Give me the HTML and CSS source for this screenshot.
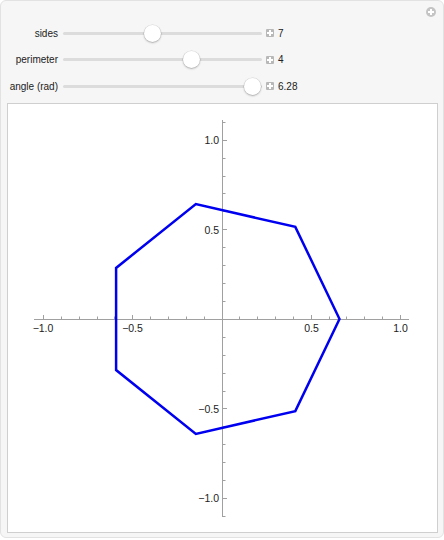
FILE: index.html
```html
<!DOCTYPE html>
<html>
<head>
<meta charset="utf-8">
<link rel="stylesheet" href="styles.css">
</head>
<body>
<div class="panel">
  <div class="topbar"><span class="addbtn"></span></div>
  <div class="controls">
    <div class="row">
      <span class="label">sides</span>
      <div class="track"><span class="thumb" style="left:89px"></span></div>
      <span class="plus"></span>
      <span class="value">7</span>
    </div>
    <div class="row">
      <span class="label">perimeter</span>
      <div class="track"><span class="thumb" style="left:128px"></span></div>
      <span class="plus"></span>
      <span class="value">4</span>
    </div>
    <div class="row">
      <span class="label">angle (rad)</span>
      <div class="track"><span class="thumb" style="left:189px"></span></div>
      <span class="plus"></span>
      <span class="value">6.28</span>
    </div>
  </div>
  <div class="plot">
    <svg class="graph" width="429" height="428" viewBox="8 104 429 428">
      <g class="axes">
        <line x1="34" y1="319.5" x2="409" y2="319.5"/>
        <line x1="222.5" y1="120" x2="222.5" y2="517"/>
        <path d="M43.5 319V315 M61.5 319V316.5 M79.5 319V316.5 M97.5 319V316.5 M114.5 319V316.5 M132.5 319V315 M150.5 319V316.5 M168.5 319V316.5 M186.5 319V316.5 M204.5 319V316.5 M239.5 319V316.5 M257.5 319V316.5 M275.5 319V316.5 M293.5 319V316.5 M311.5 319V315 M329.5 319V316.5 M346.5 319V316.5 M364.5 319V316.5 M382.5 319V316.5 M400.5 319V315"/>
        <path d="M223 122.5H225.5 M223 140.5H227 M223 158.5H225.5 M223 176.5H225.5 M223 193.5H225.5 M223 211.5H225.5 M223 229.5H227 M223 247.5H225.5 M223 265.5H225.5 M223 283.5H225.5 M223 301.5H225.5 M223 337.5H225.5 M223 355.5H225.5 M223 373.5H225.5 M223 391.5H225.5 M223 408.5H227 M223 426.5H225.5 M223 444.5H225.5 M223 462.5H225.5 M223 480.5H225.5 M223 498.5H227 M223 516.5H225.5"/>
      </g>
      <g class="ticklabels">
        <text x="43" y="331.5" text-anchor="middle">−1.0</text>
        <text x="132.5" y="331.5" text-anchor="middle">−0.5</text>
        <text x="311.5" y="331.5" text-anchor="middle">0.5</text>
        <text x="400.5" y="331.5" text-anchor="middle">1.0</text>
        <text x="219" y="144" text-anchor="end">1.0</text>
        <text x="219" y="233.5" text-anchor="end">0.5</text>
        <text x="219" y="412.5" text-anchor="end">−0.5</text>
        <text x="219" y="502" text-anchor="end">−1.0</text>
      </g>
      <polygon class="poly" points="339.5,319 295.3,226.9 195.85,204.1 116.1,267.9 116.1,370.1 195.85,433.9 295.3,411.1"/>
    </svg>
  </div>
</div>
</body>
</html>
```

FILE: styles.css
```css
html, body {
  margin: 0;
  padding: 0;
  background: #ffffff;
}

body {
  font-family: "Liberation Sans", Arial, sans-serif;
  font-size: 10px;
  color: #222;
}

.panel {
  width: 444px;
  height: 538px;
  box-sizing: border-box;
  border: 1px solid #e2e2e2;
  border-radius: 6px;
  background: #f6f6f6;
}

.topbar {
  height: 19px;
  display: flex;
  justify-content: flex-end;
  align-items: flex-end;
  padding-right: 7px;
}

.addbtn {
  position: relative;
  width: 10px;
  height: 10px;
  border-radius: 50%;
  background: #c4c4c4;
  margin-bottom: 3px;
}

.addbtn::before,
.addbtn::after {
  content: "";
  position: absolute;
  background: #fff;
  left: 50%;
  top: 50%;
  transform: translate(-50%, -50%);
}

.addbtn::before { width: 6px; height: 2px; }
.addbtn::after { width: 2px; height: 6px; }

.controls {
  display: flex;
  flex-direction: column;
}

.row {
  height: 26.5px;
  display: flex;
  align-items: center;
}

.label {
  width: 57px;
  text-align: right;
  color: #222;
}

.track {
  position: relative;
  width: 199px;
  height: 3px;
  border-radius: 2px;
  background: #dcdcdc;
  margin-left: 5px;
}

.thumb {
  position: absolute;
  top: 50%;
  width: 17px;
  height: 17px;
  margin-left: -8.5px;
  margin-top: -8.5px;
  border-radius: 50%;
  background: #fff;
  box-shadow: 0 0 0 0.5px rgba(0,0,0,0.12), 0 1px 2px rgba(0,0,0,0.25);
}

.plus {
  position: relative;
  width: 8px;
  height: 8px;
  background: #b8b8b8;
  margin-left: 4px;
  border-radius: 1px;
}

.plus::before,
.plus::after {
  content: "";
  position: absolute;
  background: #fff;
  left: 50%;
  top: 50%;
  transform: translate(-50%, -50%);
}

.plus::before { width: 6px; height: 2px; }
.plus::after { width: 2px; height: 6px; }

.value {
  margin-left: 4px;
  color: #222;
}

.plot {
  margin: 3.5px 0 0 6px;
  width: 431px;
  height: 430px;
  box-sizing: border-box;
  border: 1px solid #cfcfcf;
  background: #fff;
}

.graph {
  display: block;
}

.axes line,
.axes path {
  stroke: #a0a0a0;
  stroke-width: 1;
  fill: none;
}

.ticklabels text {
  font-family: "Liberation Sans", Arial, sans-serif;
  font-size: 10.5px;
  fill: #222;
}

.poly {
  fill: none;
  stroke: #0000f0;
  stroke-width: 2.5;
  stroke-linejoin: miter;
}
```
